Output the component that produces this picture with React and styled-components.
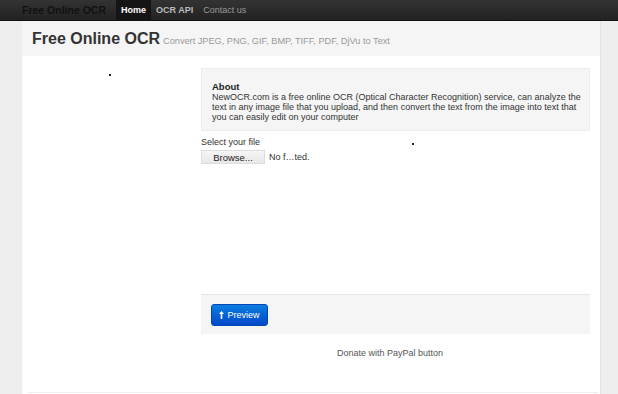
import React from "react";
import styled, { createGlobalStyle } from "styled-components";

const Global = createGlobalStyle`
  html, body {
    margin: 0;
    padding: 0;
    background: #eeeeee;
    font-family: "Liberation Sans", Arial, sans-serif;
    color: #333;
  }
`;

const Navbar = styled.div`
  height: 21px;
  background: linear-gradient(#333333, #222222);
  border-bottom: 1px solid #111;
  display: flex;
  align-items: stretch;
  padding-left: 22px;
  box-sizing: border-box;
`;

const Brand = styled.div`
  font-size: 10.5px;
  font-weight: bold;
  color: #111;
  display: flex;
  align-items: center;
  margin-right: 10px;
`;

const NavItem = styled.div`
  font-size: 9px;
  display: flex;
  align-items: center;
  padding: 0 5px;
  font-weight: ${(p) => (p.bold ? "bold" : "normal")};
  color: ${(p) => (p.active ? "#fff" : p.bold ? "#bbb" : "#999")};
  background: ${(p) => (p.active ? "#151515" : "transparent")};
`;

const Container = styled.div`
  margin-left: 22px;
  width: 579px;
  background: #fff;
  border-right: 1px solid #e2e2e2;
  box-sizing: border-box;
  min-height: 373px;
  position: relative;
`;

const Header = styled.div`
  height: 35px;
  background: #f5f5f5;
  display: flex;
  align-items: baseline;
  padding: 9px 0 0 10px;
  box-sizing: border-box;
`;

const Title = styled.h1`
  margin: 0;
  font-size: 16px;
  font-weight: bold;
  color: #333;
`;

const Subtitle = styled.span`
  margin-left: 3px;
  font-size: 9.2px;
  color: #999;
`;

const Row = styled.div`
  display: flex;
  padding-top: 12px;
`;

const Side = styled.div`
  width: 179px;
  position: relative;
`;

const Main = styled.div`
  width: 389px;
  position: relative;
`;

const Dot = styled.span`
  position: absolute;
  width: 2px;
  height: 2px;
  background: #222;
`;

const About = styled.div`
  background: #f5f5f5;
  border: 1px solid #ececec;
  padding: 13px 10px 7px;
  font-size: 9px;
  line-height: 10px;
  color: #333;
  height: 63px;
  box-sizing: border-box;
  white-space: nowrap;
`;

const AboutTitle = styled.div`
  font-weight: bold;
  font-size: 9.5px;
  color: #222;
`;

const Label = styled.div`
  margin-top: 6px;
  font-size: 9px;
  color: #333;
`;

const FileRow = styled.div`
  display: flex;
  align-items: center;
  margin-top: 3px;
  font-size: 9px;
  color: #333;
`;

const Browse = styled.div`
  width: 64px;
  height: 14px;
  background: linear-gradient(#f5f5f5, #e8e8e8);
  border: 1px solid #ddd;
  box-sizing: border-box;
  display: flex;
  align-items: center;
  justify-content: center;
  font-size: 9.5px;
  color: #222;
  margin-right: 4px;
`;

const Spacer = styled.div`
  height: 130px;
`;

const Actions = styled.div`
  background: #f5f5f5;
  border-top: 1px solid #e5e5e5;
  height: 40px;
  box-sizing: border-box;
  padding: 9px 10px;
`;

const Button = styled.div`
  width: 57px;
  height: 22px;
  box-sizing: border-box;
  border-radius: 3px;
  background: linear-gradient(#0a7ee0, #0048c8);
  border: 1px solid #0046b8;
  color: #fff;
  font-size: 9px;
  display: flex;
  align-items: center;
  justify-content: center;
  gap: 3px;
  padding-bottom: 1px;
`;

const Donate = styled.div`
  text-align: center;
  font-size: 9px;
  color: #555;
  margin-top: 14px;
  padding-right: 11px;
`;

const Rule = styled.div`
  position: absolute;
  left: 6px;
  right: 2px;
  top: 371px;
  border-top: 1px solid #eee;
`;

export default function App() {
  return (
    <>
      <Global />
      <Navbar>
        <Brand>Free Online OCR</Brand>
        <NavItem active bold>Home</NavItem>
        <NavItem bold>OCR API</NavItem>
        <NavItem>Contact us</NavItem>
      </Navbar>
      <Container>
        <Header>
          <Title>Free Online OCR</Title>
          <Subtitle>Convert JPEG, PNG, GIF, BMP, TIFF, PDF, DjVu to Text</Subtitle>
        </Header>
        <Row>
          <Side>
            <Dot style={{ left: 87, top: 6 }} />
          </Side>
          <Main>
            <About>
              <AboutTitle>About</AboutTitle>
              NewOCR.com is a free online OCR (Optical Character Recognition) service, can analyze the
              <br />
              text in any image file that you upload, and then convert the text from the image into text that
              <br />
              you can easily edit on your computer
            </About>
            <Label>Select your file</Label>
            <FileRow>
              <Browse>Browse...</Browse>
              No f…ted.
            </FileRow>
            <Dot style={{ left: 211, top: 75 }} />
            <Spacer />
            <Actions>
              <Button>
                <svg width="5" height="8" viewBox="0 0 5 8">
                  <path d="M2.5 0 L5 3 H3.3 V8 H1.7 V3 H0 Z" fill="#fff" />
                </svg>
                Preview
              </Button>
            </Actions>
            <Donate>Donate with PayPal button</Donate>
          </Main>
        </Row>
        <Rule />
      </Container>
    </>
  );
}
